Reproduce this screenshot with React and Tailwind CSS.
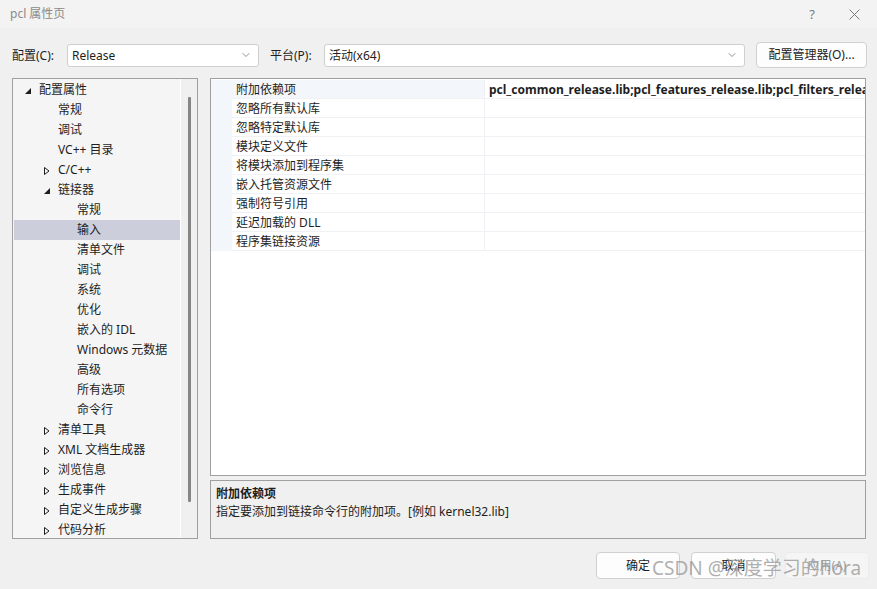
import React from "react"
import { ChevronDown } from "lucide-react"

const tree = [
  { label: "配置属性", level: 0, arrow: "open" },
  { label: "常规", level: 1 },
  { label: "调试", level: 1 },
  { label: "VC++ 目录", level: 1 },
  { label: "C/C++", level: 1, arrow: "closed" },
  { label: "链接器", level: 1, arrow: "open" },
  { label: "常规", level: 2 },
  { label: "输入", level: 2, selected: true },
  { label: "清单文件", level: 2 },
  { label: "调试", level: 2 },
  { label: "系统", level: 2 },
  { label: "优化", level: 2 },
  { label: "嵌入的 IDL", level: 2 },
  { label: "Windows 元数据", level: 2 },
  { label: "高级", level: 2 },
  { label: "所有选项", level: 2 },
  { label: "命令行", level: 2 },
  { label: "清单工具", level: 1, arrow: "closed" },
  { label: "XML 文档生成器", level: 1, arrow: "closed" },
  { label: "浏览信息", level: 1, arrow: "closed" },
  { label: "生成事件", level: 1, arrow: "closed" },
  { label: "自定义生成步骤", level: 1, arrow: "closed" },
  { label: "代码分析", level: 1, arrow: "closed" },
]

const props = [
  { name: "附加依赖项", value: "pcl_common_release.lib;pcl_features_release.lib;pcl_filters_release.lib;pcl_io_release.lib" },
  { name: "忽略所有默认库" },
  { name: "忽略特定默认库" },
  { name: "模块定义文件" },
  { name: "将模块添加到程序集" },
  { name: "嵌入托管资源文件" },
  { name: "强制符号引用" },
  { name: "延迟加载的 DLL" },
  { name: "程序集链接资源" },
]

const indent = ["pl-[10px]", "pl-[29px]", "pl-[48px]"]

const Arrow = ({ kind }) => {
  if (kind === "open")
    return (
      <svg width="8" height="8" viewBox="0 0 8 8" className="mt-[2px]">
        <polygon points="7,1 7,7 1,7" fill="#1e1e1e" />
      </svg>
    )
  if (kind === "closed")
    return (
      <svg width="8" height="10" viewBox="0 0 8 10" className="mt-[1px]">
        <polygon points="1.5,1.5 6,5 1.5,8.5" fill="none" stroke="#1e1e1e" strokeWidth="1" />
      </svg>
    )
  return null
}

const Select = ({ value, width }) => (
  <div className={`${width} h-[23px] bg-white border border-[#cfcfcf] rounded-[3px] flex items-center pl-[4px] pr-[6px]`}>
    <span className="flex-1 text-[#1e1e1e] pt-[1px]">{value}</span>
    <ChevronDown size={12} strokeWidth={1.4} className="text-[#606060]" />
  </div>
)

export default function App() {
  return (
    <div className="relative w-[877px] h-[589px] overflow-hidden bg-[#f0f0f0] text-[12px] leading-none text-[#1e1e1e] font-['Noto_Sans','Noto_Sans_CJK_SC',sans-serif]">

      {/* title bar */}
      <div className="h-[28px] bg-[#f3f3f3] flex items-center pl-[10px] pr-[17px]">
        <span className="text-[#8a8a8a]">pcl 属性页</span>
        <span className="ml-auto text-[13px] text-[#7a7a7a] mr-[34px]">?</span>
        <svg width="11" height="11" viewBox="0 0 11 11">
          <path d="M0.5 0.5 L10.5 10.5 M10.5 0.5 L0.5 10.5" stroke="#7a7a7a" strokeWidth="1" />
        </svg>
      </div>

      {/* config row */}
      <div className="mt-[14px] h-[26px] flex items-center pl-[12px]">
        <span className="w-[55px] pt-[1px]">配置(C):</span>
        <Select value="Release" width="w-[192px]" />
        <span className="ml-[11px] w-[54px] pt-[1px]">平台(P):</span>
        <Select value="活动(x64)" width="w-[421px]" />
        <div className="ml-[11px] w-[111px] h-[26px] bg-[#fdfdfd] border border-[#d0d0d0] rounded-[4px] flex items-center justify-center">
          配置管理器(O)...
        </div>
      </div>

      {/* main */}
      <div className="mt-[10px] flex pl-[12px]">
        {/* tree */}
        <div className="w-[186px] h-[461px] border border-[#a0a0a0] bg-[#f5f5f5] flex overflow-hidden">
          <div className="flex-1 flex flex-col pt-[1px]">
            {tree.map((t, i) => (
              <div
                key={i}
                className={`h-[20px] shrink-0 flex items-center ml-[1px] ${indent[t.level]} ${t.selected ? "bg-[#cccedb]" : ""}`}
              >
                <span className="w-[15px] flex items-center">
                  <Arrow kind={t.arrow} />
                </span>
                <span className="whitespace-nowrap">{t.label}</span>
              </div>
            ))}
          </div>
          <div className="w-[17px] border-l border-white bg-[#f0f0f0] flex justify-center pt-[18px]">
            <div className="w-[3px] h-[405px] bg-[#868686] rounded-[1px]" />
          </div>
        </div>

        {/* right column */}
        <div className="ml-[12px] w-[656px] flex flex-col gap-[4px]">
          <div className="h-[398px] border border-[#a0a0a0] bg-white pt-[1px] overflow-hidden">
            {props.map((p, i) => (
              <div key={i} className="h-[19px] flex">
                <div className="w-[21px] bg-[#f3f6fb]" />
                <div className={`w-[252px] flex items-center pl-[4px] pt-[1px] border-b border-[#f0f1f4] ${i === 0 ? "bg-[#f3f6fb]" : ""}`}>
                  {p.name}
                </div>
                <div className="flex-1 flex items-center pl-[4px] pt-[1px] border-l border-b border-[#f0f1f4] overflow-hidden whitespace-nowrap font-bold">
                  {p.value}
                </div>
              </div>
            ))}
          </div>
          <div className="h-[59px] border border-[#a0a0a0] bg-[#f0f0f0] px-[5px] pt-[7px]">
            <div className="font-bold">附加依赖项</div>
            <div className="mt-[6px]">指定要添加到链接命令行的附加项。[例如 kernel32.lib]</div>
          </div>
        </div>
      </div>

      {/* buttons */}
      <div className="mt-[13px] flex justify-end pr-[8px]">
        <div className="w-[84px] h-[27px] bg-[#fdfdfd] border border-[#d0d0d0] rounded-[4px] flex items-center justify-center">确定</div>
        <div className="ml-[11px] w-[85px] h-[27px] bg-[#fdfdfd] border border-[#d0d0d0] rounded-[4px] flex items-center justify-center">取消</div>
        <div className="ml-[9px] w-[84px] h-[27px] bg-[#f5f5f5] border border-[#ececec] rounded-[4px] flex items-center justify-center text-[#a0a0a0]">应用(A)</div>
      </div>

      {/* watermark */}
      <div className="absolute left-[652px] top-[559px] text-[19px] text-[#9a9a9a]/80 whitespace-nowrap">
        CSDN @深度学习的hora
      </div>
    </div>
  )
}
